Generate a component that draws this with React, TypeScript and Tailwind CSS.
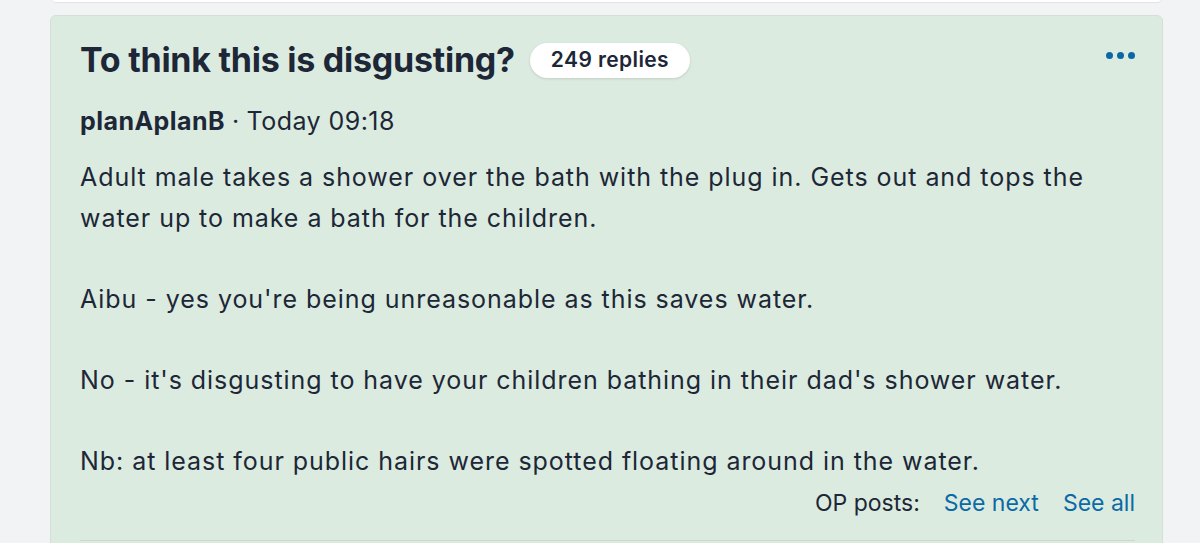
const paragraphs = [
  'Adult male takes a shower over the bath with the plug in. Gets out and tops the water up to make a bath for the children.',
  "Aibu - yes you're being unreasonable as this saves water.",
  "No - it's disgusting to have your children bathing in their dad's shower water.",
  'Nb: at least four public hairs were spotted floating around in the water.',
];

function App() {
  return (
    <div
      className="h-[543px] w-full overflow-hidden bg-[#f2f3f5] pl-[50px] pr-[37px] text-[#1d2737]"
      style={{ fontFamily: 'Inter, "Liberation Sans", sans-serif' }}
    >
      {/* previous card, mostly scrolled out of view */}
      <div className="-mt-[40px] h-[43px] rounded-b-md border border-[#e1e4e8] bg-white" />

      <article className="mt-[12px] rounded-md border border-[#d3e0d6] bg-[#dcebdf] pl-[29px] pr-[27px]">
        <header className="flex h-[40px] items-center justify-between mt-[24px]">
          <div className="flex items-center gap-[15px]">
            <h1 className="text-[34px] font-bold leading-[40px] tracking-[-0.25px]">To think this is disgusting?</h1>
            <span className="flex h-[35px] items-center rounded-full bg-white px-[21px] text-[21px] font-semibold tracking-[0.4px] shadow-[0_1px_3px_rgba(0,0,0,0.12)]">
              249 replies
            </span>
          </div>
          <button className="-mt-[10px] flex gap-[4px]">
            <span className="h-[7px] w-[7px] rounded-full bg-[#0a67a8]" />
            <span className="h-[7px] w-[7px] rounded-full bg-[#0a67a8]" />
            <span className="h-[7px] w-[7px] rounded-full bg-[#0a67a8]" />
          </button>
        </header>

        <div className="mt-[25px] text-[25px] leading-[32px] tracking-[0.45px]">
          <span className="font-bold">planAplanB</span>
          <span className="mx-[7px]">·</span>
          <span>Today 09:18</span>
        </div>

        <div className="mt-[20px] space-y-[40px] text-[25px] leading-[41px] tracking-[0.95px]">
          {paragraphs.map((p) => (
            <p key={p}>{p}</p>
          ))}
        </div>

        <div className="mt-[6px] flex h-[30px] items-center justify-end gap-[24px] text-[23px]">
          <span>OP posts:</span>
          <a className="text-[#0b6aa6]">See next</a>
          <a className="text-[#0b6aa6]">See all</a>
        </div>
        <div className="mt-[22px] border-t border-[#cad8cd]" />
        <div className="h-[40px]" />
      </article>
    </div>
  );
}

export default App;
